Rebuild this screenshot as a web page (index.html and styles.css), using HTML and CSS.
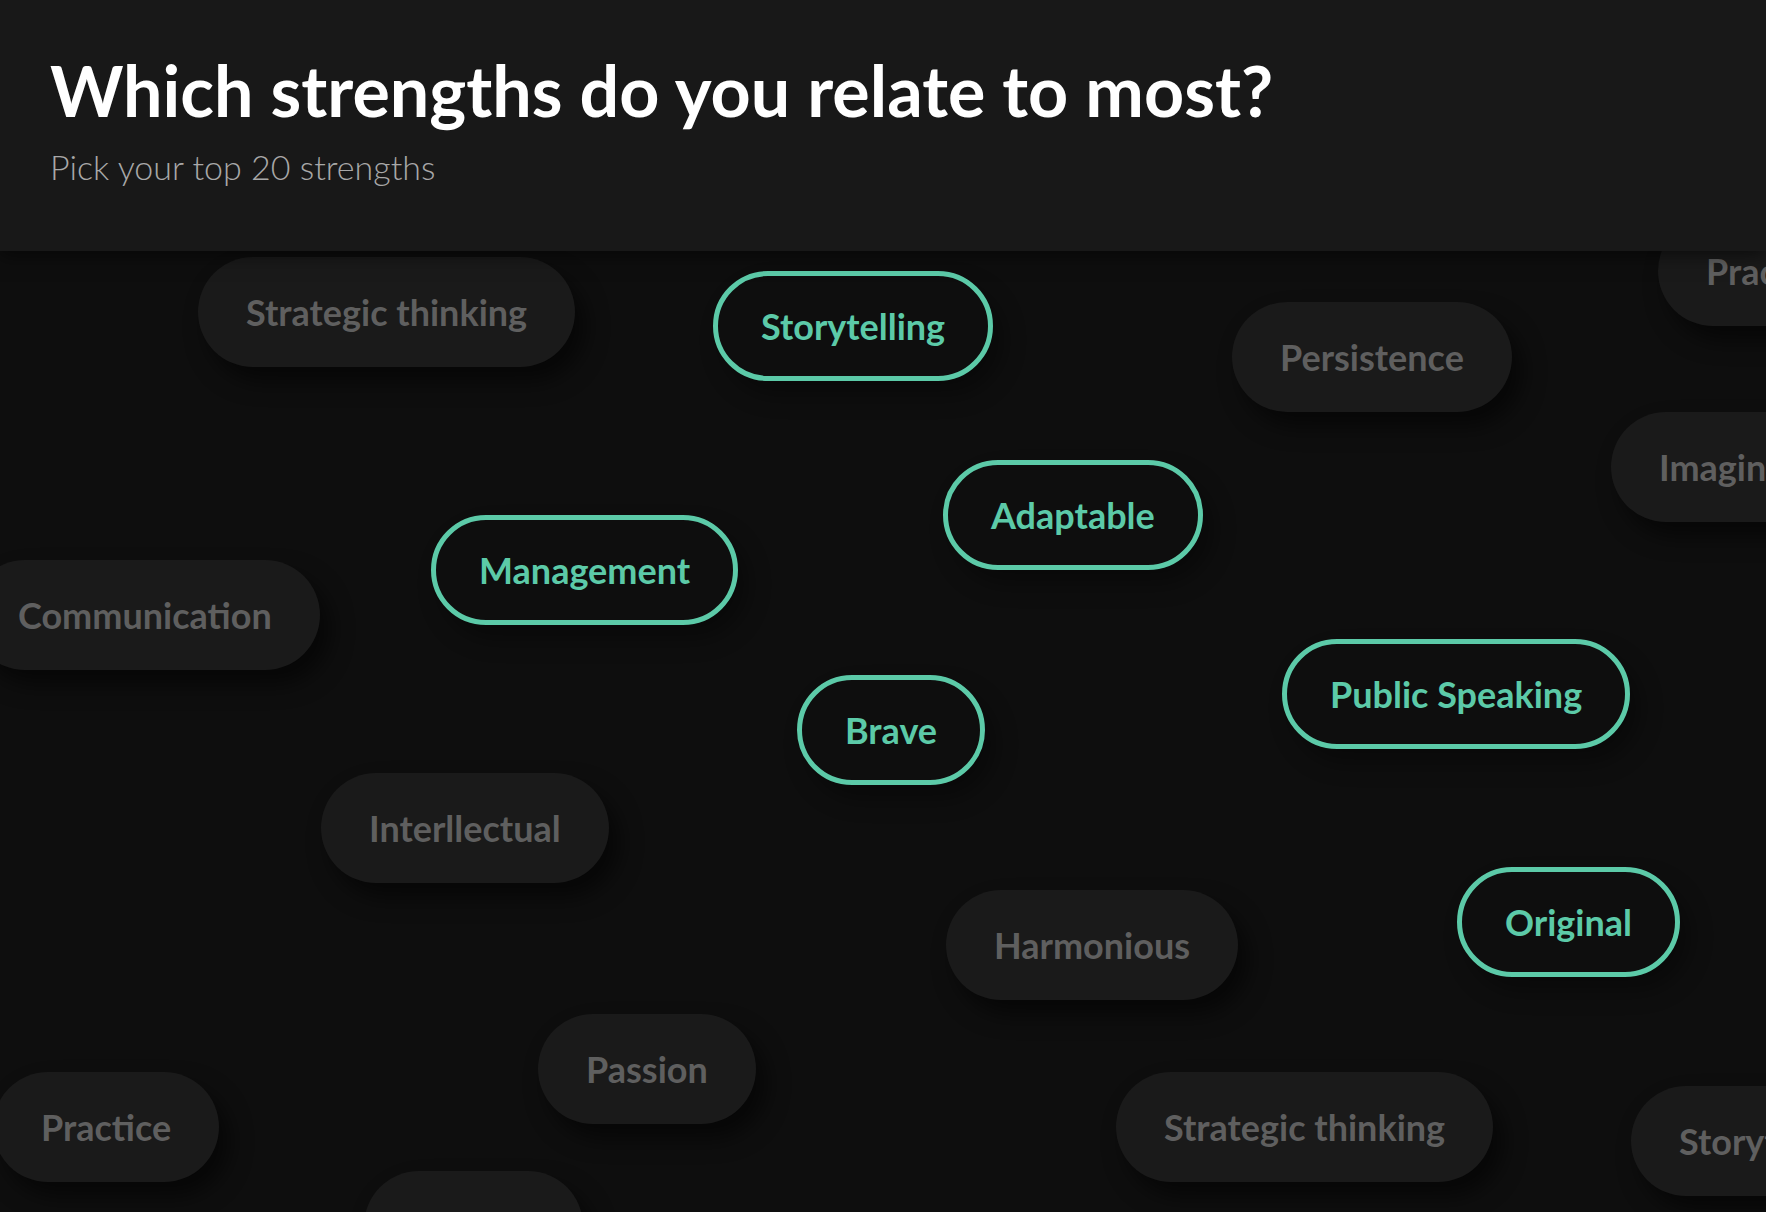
FILE: index.html
```html
<!DOCTYPE html>
<html lang="en">
<head>
<meta charset="utf-8">
<title>Strengths</title>
<link rel="stylesheet" href="styles.css">
</head>
<body>
<div class="page">
  <header class="header">
    <h1 class="title">Which strengths do you relate to most?</h1>
    <p class="subtitle">Pick your top 20 strengths</p>
  </header>
  <main class="canvas">
    <span class="pill" style="left:198px;top:6px">Strategic thinking</span>
    <span class="pill selected" style="left:713px;top:20px">Storytelling</span>
    <span class="pill" style="left:1658px;top:-35px">Practice</span>
    <span class="pill" style="left:1232px;top:51px">Persistence</span>
    <span class="pill" style="left:1611px;top:161px">Imagination</span>
    <span class="pill selected" style="left:943px;top:209px">Adaptable</span>
    <span class="pill selected" style="left:431px;top:264px">Management</span>
    <span class="pill" style="left:-30px;top:309px">Communication</span>
    <span class="pill selected" style="left:1282px;top:388px">Public Speaking</span>
    <span class="pill selected" style="left:797px;top:424px">Brave</span>
    <span class="pill" style="left:321px;top:522px">Interllectual</span>
    <span class="pill" style="left:946px;top:639px">Harmonious</span>
    <span class="pill selected" style="left:1457px;top:616px">Original</span>
    <span class="pill" style="left:538px;top:763px">Passion</span>
    <span class="pill" style="left:-7px;top:821px">Practice</span>
    <span class="pill" style="left:1116px;top:821px">Strategic thinking</span>
    <span class="pill" style="left:1631px;top:835px">Storytelling</span>
    <span class="pill" style="left:364px;top:920px">Curious</span>
  </main>
</div>
</body>
</html>
```

FILE: styles.css
```css
* { box-sizing: border-box; }
html, body {
  margin: 0;
  padding: 0;
  height: 100%;
  background: #0e0e0e;
  overflow: hidden;
}
body {
  font-family: Lato, "Open Sans", sans-serif;
}
.page {
  display: flex;
  flex-direction: column;
  height: 100vh;
  overflow: hidden;
}
.header {
  position: relative;
  z-index: 2;
  height: 251px;
  flex: none;
  background: #181818;
  padding: 48px 50px 0;
  box-shadow: 0 4px 18px rgba(0, 0, 0, 0.55);
}
.title {
  margin: 0;
  color: #ffffff;
  font-size: 70px;
  font-weight: 700;
  line-height: 84px;
  letter-spacing: 0;
}
.subtitle {
  margin: 14px 0 0;
  color: #a8a8a8;
  font-size: 34px;
  font-weight: 300;
  line-height: 42px;
}
.canvas {
  position: relative;
  flex: 1;
  z-index: 1;
}
.pill {
  position: absolute;
  display: inline-flex;
  align-items: center;
  height: 110px;
  padding: 0 48px;
  border-radius: 55px;
  background: #1a1a1a;
  color: #5f5f5f;
  font-size: 36px;
  font-weight: 700;
  white-space: nowrap;
  box-shadow: 10px 14px 22px rgba(0, 0, 0, 0.55);
}
.pill.selected {
  background: #0e0e0e;
  border: 5px solid #5ccaa8;
  padding: 0 43px;
  color: #5ccaa8;
  box-shadow: 10px 14px 22px rgba(0, 0, 0, 0.35);
}
```
